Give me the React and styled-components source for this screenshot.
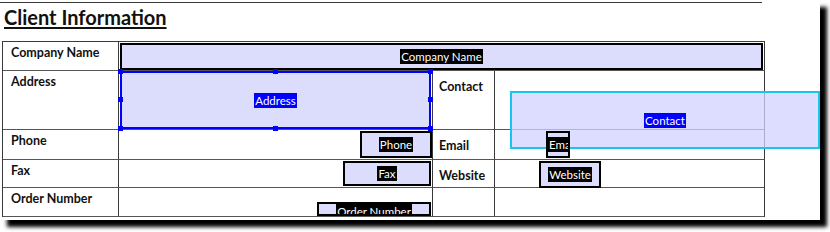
import styled, { createGlobalStyle } from 'styled-components';

const GlobalStyle = createGlobalStyle`
  html, body {
    margin: 0;
    padding: 0;
    background: #fff;
  }
  body {
    font-family: Lato, "Liberation Sans", sans-serif;
    color: #111;
  }
`;

// room round the page so its drop shadow is kept in the shot
const Frame = styled.div`
  width: 830px;
  height: 232px;
  overflow: hidden;
`;

const Page = styled.div`
  position: relative;
  box-sizing: border-box;
  width: 820px;
  height: 220px;
  padding-top: 2px;
  background: #fff;
  box-shadow: 7px 7px 4px 0 #000;
`;

const TopRule = styled.div`
  width: 762px;
  height: 1px;
  background: #3a3a3a;
`;

const Title = styled.h1`
  box-sizing: border-box;
  height: 38px;
  margin: 0;
  padding: 2px 0 0 4px;
  font-size: 20px;
  line-height: 24px;
  font-weight: 700;
  color: #111;
  text-decoration: underline;
  text-decoration-thickness: 2px;
  text-underline-offset: 2px;
`;

const Table = styled.div`
  display: grid;
  grid-template-columns: 116px 314px 62px 270px;
  grid-template-rows: 29px 59px 30px 28px 29px;
  width: 763px;
  margin-left: 2px;
  box-sizing: border-box;
  border-top: 1px solid #3a3a3a;
  border-left: 1px solid #3a3a3a;
`;

const Cell = styled.div`
  box-sizing: border-box;
  border-right: 1px solid #3a3a3a;
  border-bottom: 1px solid #555;
  grid-column: ${p => p.$span ? `span ${p.$span}` : 'auto'};
  display: flex;
  justify-content: ${p => p.$justify || 'flex-start'};
  align-items: ${p => p.$align || 'flex-start'};
  padding: ${p => p.$pad || '0'};
  min-width: 0;
`;

const Label = styled.div`
  font-size: 12.5px;
  line-height: 15px;
  font-weight: 700;
  white-space: nowrap;
  padding: ${p => p.$right ? '8px 0 0 6px' : '3px 0 0 8px'};
`;

const Field = styled.div`
  position: relative;
  z-index: ${p => p.$raised ? 2 : 'auto'};
  box-sizing: border-box;
  flex: none;
  width: ${p => p.$w ? `${p.$w}px` : '100%'};
  height: ${p => p.$h ? `${p.$h}px` : '100%'};
  margin-left: ${p => p.$ml || 0}px;
  border: 2px solid ${p => p.$selected ? '#0000ff' : '#000'};
  background: #dcdcfc;
  display: flex;
  justify-content: safe center;
  align-items: safe center;
  overflow: ${p => p.$selected ? 'visible' : 'hidden'};
`;

const FieldText = styled.span`
  flex: none;
  padding: 0 1px;
  background: ${p => p.$selected ? '#0000ff' : '#000'};
  color: #fff;
  font-size: 11.5px;
  line-height: 15px;
  white-space: nowrap;
`;

const Handle = styled.span`
  position: absolute;
  width: 5px;
  height: 5px;
  background: #0000ff;
  left: ${p => p.$x === 'l' ? '-4px' : p.$x === 'c' ? 'calc(50% - 3px)' : 'auto'};
  right: ${p => p.$x === 'r' ? '-4px' : 'auto'};
  top: ${p => p.$y === 't' ? '-4px' : p.$y === 'c' ? 'calc(50% - 3px)' : 'auto'};
  bottom: ${p => p.$y === 'b' ? '-4px' : 'auto'};
`;

const FloatingField = styled(Field)`
  position: absolute;
  z-index: 1;
  left: 510px;
  top: 91px;
  width: 310px;
  height: 58px;
  border: 2px solid #19c5ee;
  background: rgba(210, 210, 255, 0.75);
`;

const handles = [
  ['l', 't'], ['c', 't'], ['r', 't'],
  ['l', 'c'], ['r', 'c'],
  ['l', 'b'], ['c', 'b'], ['r', 'b'],
];

export default function App() {
  return (
    <>
      <GlobalStyle />
      <Frame>
        <Page>
          <TopRule />
          <Title>Client Information</Title>
          <Table>
            <Cell><Label>Company Name</Label></Cell>
            <Cell $span={3} $pad="1px 1px 0 1px">
              <Field $h={27}><FieldText>Company Name</FieldText></Field>
            </Cell>

            <Cell><Label>Address</Label></Cell>
            <Cell $pad="0 1px 0 1px">
              <Field $selected>
                <FieldText $selected>Address</FieldText>
                {handles.map(([x, y]) => <Handle key={x + y} $x={x} $y={y} />)}
              </Field>
            </Cell>
            <Cell><Label $right>Contact</Label></Cell>
            <Cell />

            <Cell><Label>Phone</Label></Cell>
            <Cell $justify="flex-end" $pad="1px 0 0 0">
              <Field $w={72} $h={27}><FieldText>Phone</FieldText></Field>
            </Cell>
            <Cell><Label $right>Email</Label></Cell>
            <Cell $pad="1px 0 0 0">
              <Field $w={24} $h={27} $ml={51} $raised><FieldText>Email</FieldText></Field>
            </Cell>

            <Cell><Label>Fax</Label></Cell>
            <Cell $justify="flex-end" $pad="1px 1px 0 0">
              <Field $w={88} $h={25}><FieldText>Fax</FieldText></Field>
            </Cell>
            <Cell><Label $right>Website</Label></Cell>
            <Cell $pad="1px 0 0 0">
              <Field $w={62} $h={27} $ml={44}><FieldText>Website</FieldText></Field>
            </Cell>

            <Cell><Label>Order Number</Label></Cell>
            <Cell $justify="flex-end" $align="flex-end" $pad="0 1px 0 0">
              <Field $w={114} $h={14}><FieldText>Order Number</FieldText></Field>
            </Cell>
            <Cell />
            <Cell />
          </Table>
          <FloatingField>
            <FieldText $selected>Contact</FieldText>
          </FloatingField>
        </Page>
      </Frame>
    </>
  );
}
